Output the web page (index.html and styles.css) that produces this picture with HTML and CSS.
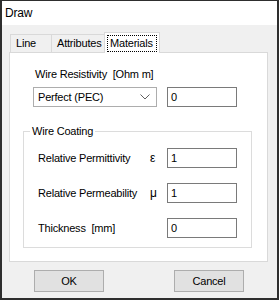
FILE: index.html
```html
<!DOCTYPE html>
<html lang="en">
    <head>
        <meta charset="UTF-8"/>
        <title>Draw</title>
        <link rel="stylesheet" href="styles.css">
    </head>
    <body>
        <div class="window">
            <div class="titlebar">Draw</div>
            <div class="client">
                <div class="tabs">
                    <div class="tab tab-line">Line</div>
                    <div class="tab tab-attr">Attributes</div>
                    <div class="tab tab-mat active"><span class="focus">Materials</span></div>
                </div>
                <div class="panel">
                    <div class="caption">Wire Resistivity&nbsp; [Ohm m]</div>
                    <div class="res-row">
                        <div class="combo">
                            <span>Perfect (PEC)</span>
                            <svg class="arrow" width="10" height="6" viewBox="0 0 10 6">
                                <path d="M0.5 0.5 L5 5 L9.5 0.5" fill="none" stroke="#606060" stroke-width="1"/>
                            </svg>
                        </div>
                        <div class="field">0</div>
                    </div>
                    <fieldset class="group">
                        <legend>Wire Coating</legend>
                        <div class="row">
                            <span class="name">Relative Permittivity</span>
                            <span class="sym">&epsilon;</span>
                            <div class="field">1</div>
                        </div>
                        <div class="row">
                            <span class="name">Relative Permeability</span>
                            <span class="sym">&mu;</span>
                            <div class="field">1</div>
                        </div>
                        <div class="row">
                            <span class="name">Thickness&nbsp; [mm]</span>
                            <span class="sym"></span>
                            <div class="field">0</div>
                        </div>
                    </fieldset>
                </div>
                <div class="buttons">
                    <div class="btn">OK</div>
                    <div class="btn">Cancel</div>
                </div>
            </div>
        </div>
    </body>
</html>
```

FILE: styles.css
```css
body {
    margin: 0;
    font-family: "Liberation Sans", Arial, sans-serif;
    font-size: 11px;
    letter-spacing: -0.2px;
    color: #000;
    background: #fff;
}

.window {
    box-sizing: border-box;
    width: 279px;
    height: 300px;
    border: 2px solid #2e2e2e;
    border-top-width: 1px;
    display: flex;
    flex-direction: column;
    background: #f0f0f0;
}

.titlebar {
    height: 24px;
    line-height: 24px;
    padding-left: 3px;
    background: #fff;
    font-size: 12px;
}

.client {
    flex: 1;
    padding: 7px 9px 0 7px;
}

.tabs {
    display: flex;
    align-items: flex-end;
    height: 20px;
    padding-left: 1px;
}

.tab {
    box-sizing: border-box;
    height: 18px;
    line-height: 17px;
    border: 1px solid #d9d9d9;
    border-bottom: none;
    background: #f0f0f0;
    padding-left: 5px;
}

.tab-line {
    width: 41px;
    border-right: none;
}

.tab-attr {
    width: 55px;
}

.tab-mat {
    width: 56px;
    margin-left: -2px;
}

.tab.active {
    height: 21px;
    margin-bottom: -1px;
    background: #fff;
    padding: 2px 2px 0 2px;
    position: relative;
}

.focus {
    display: block;
    height: 15px;
    line-height: 14px;
    padding-left: 2px;
    border: 1px dotted #000;
}

.panel {
    box-sizing: border-box;
    height: 210px;
    background: #fff;
    border: 1px solid #d9d9d9;
    padding: 14px 0 0 23px;
}

.caption {
    height: 15px;
    line-height: 15px;
    padding-left: 2px;
}

.res-row {
    display: flex;
    margin-top: 5px;
}

.combo {
    box-sizing: border-box;
    width: 124px;
    height: 20px;
    border: 1px solid #adadad;
    display: flex;
    align-items: center;
    justify-content: space-between;
    padding: 0 6px 0 4px;
}

.field {
    box-sizing: border-box;
    width: 70px;
    height: 20px;
    line-height: 18px;
    border: 1px solid #7a7a7a;
    padding-left: 3px;
    margin-left: 10px;
}

.group {
    box-sizing: border-box;
    width: 229px;
    height: 124px;
    margin: 17px 0 0 -10px;
    padding: 10px 0 0 14px;
    border: 1px solid #dcdcdc;
    min-width: 0;
}

.group legend {
    padding: 0 2px;
    margin-left: -8px;
    line-height: 14px;
}

.row {
    display: flex;
    align-items: center;
    height: 20px;
    margin-bottom: 15px;
}

.name {
    width: 112px;
}

.sym {
    width: 6px;
    font-size: 12px;
}

.row .field {
    margin-left: 11px;
}

.buttons {
    display: flex;
    justify-content: space-between;
    padding: 8px 24px 0 25px;
}

.btn {
    box-sizing: border-box;
    width: 70px;
    height: 22px;
    line-height: 20px;
    text-align: center;
    background: #e1e1e1;
    border: 1px solid #adadad;
}
```
